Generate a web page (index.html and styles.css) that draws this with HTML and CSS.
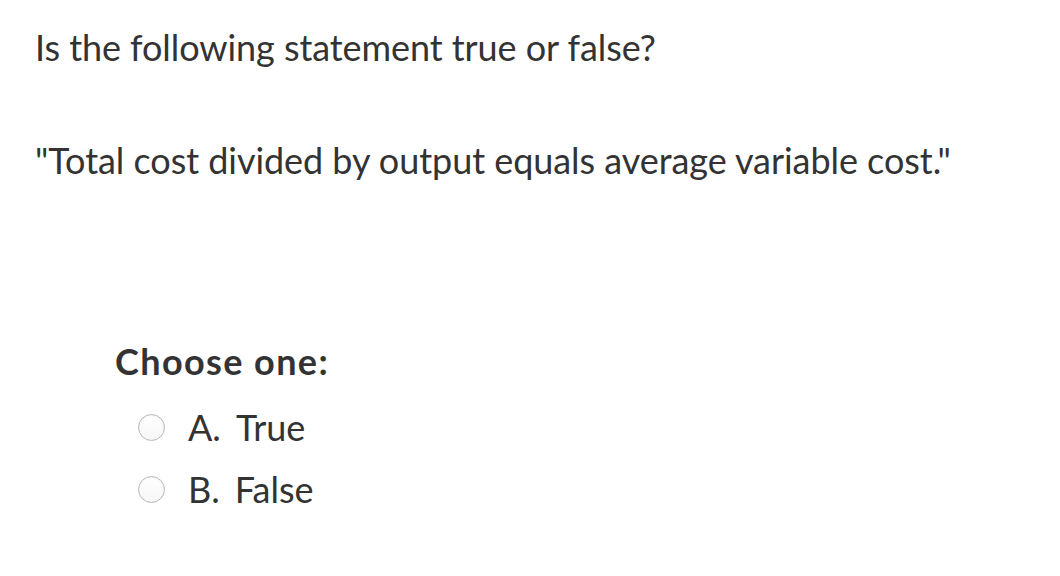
FILE: index.html
```html
<!DOCTYPE html>
<html>
<head>
<meta charset="utf-8">
<link rel="stylesheet" href="styles.css">
</head>
<body>
<div class="question">
  <p class="prompt">Is the following statement true or false?</p>
  <p class="statement">"Total cost divided by output equals average variable cost."</p>
  <div class="answer">
    <p class="choose">Choose one:</p>
    <ul class="options">
      <li class="option"><span class="radio"></span><span class="letter">A.</span><span class="label">True</span></li>
      <li class="option"><span class="radio"></span><span class="letter">B.</span><span class="label">False</span></li>
    </ul>
  </div>
</div>
</body>
</html>
```
FILE: styles.css
```css
html, body {
  margin: 0;
  padding: 0;
  background: #ffffff;
}
body {
  font-family: Lato, "Open Sans", sans-serif;
  color: #333333;
}
.question {
  padding: 26px 0 0 35px;
}
.prompt {
  margin: 0;
  font-size: 36px;
  line-height: 43px;
  letter-spacing: -0.07px;
}
.statement {
  margin: 70px 0 0 0;
  font-size: 36px;
  line-height: 43px;
  letter-spacing: -0.05px;
}
.answer {
  margin: 158px 0 0 80px;
}
.choose {
  margin: 0;
  font-size: 36px;
  line-height: 43px;
  font-weight: bold;
  letter-spacing: 1.4px;
}
.options {
  list-style: none;
  margin: 13px 0 0 0;
  padding: 0;
}
.option {
  display: flex;
  align-items: center;
  height: 62px;
  font-size: 36px;
  padding-left: 23px;
}
.radio {
  width: 25px;
  height: 25px;
  border: 1px solid #b8b8b8;
  border-radius: 50%;
  background: linear-gradient(#ffffff, #f6f6f6);
  box-shadow: inset 0 1px 2px rgba(0,0,0,0.06);
  margin-right: 23px;
  flex: none;
}
.letter {
  margin-right: 15px;
}
```
